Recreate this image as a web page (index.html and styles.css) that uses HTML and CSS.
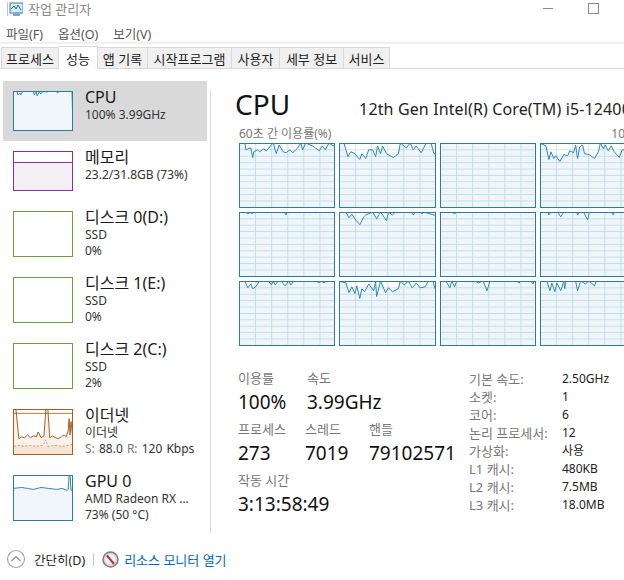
FILE: index.html
```html
<!DOCTYPE html>
<html lang="ko">
<head>
    <meta charset="UTF-8">
    <meta name="viewport" content="width=device-width, initial-scale=1.0">
    <title>작업 관리자</title>
    <link rel="stylesheet" href="styles.css">
</head>
<body>
    <div class="window">
        <div class="titlebar">
            <div class="title">
                <svg class="app-icon" width="16" height="16" viewBox="0 0 16 16">
                    <path d="M0 1v14" stroke="#8a8a8a" fill="none"/>
                    <rect x="3" y="2" width="13" height="10" fill="#d6ecf8" stroke="#3f7fa8"/>
                    <path d="M4 8l3-3 2 3 2-4 3 5" stroke="#2a6d99" fill="none"/>
                    <path d="M6 12h7v3H6z" fill="#7aa7c4"/>
                </svg>
                <span>작업 관리자</span>
            </div>
            <div class="window-buttons">
                <span class="btn-min"></span>
                <span class="btn-max"></span>
            </div>
        </div>

        <div class="menu">
            <span>파일(F)</span>
            <span>옵션(O)</span>
            <span>보기(V)</span>
        </div>

        <div class="tabs">
            <div class="tab tab-process">프로세스</div>
            <div class="tab active">성능</div>
            <div class="tab tab-history">앱 기록</div>
            <div class="tab tab-startup">시작프로그램</div>
            <div class="tab tab-users">사용자</div>
            <div class="tab tab-details">세부 정보</div>
            <div class="tab tab-services">서비스</div>
        </div>

        <div class="main">
            <div class="sidebar">
                <div class="res-row selected short">
                    <svg class="thumb thumb-cpu" viewBox="0 0 60 40" preserveAspectRatio="none">
                        <polygon points="-1,-1 3,-1 4,3 6,1 7,3 9,-1 20,-1 21,3 23,0 24,4 26,0 28,2 30,-1 34,0 36,-1 44,-1 45,1 47,-1 60,-1 61,41 -1,41"/>
                    </svg>
                    <div class="res-text">
                        <div class="res-name">CPU</div>
                        <div class="res-line">100% 3.99GHz</div>
                    </div>
                </div>
                <div class="res-row short">
                    <div class="thumb thumb-mem"><div class="mem-used"></div></div>
                    <div class="res-text">
                        <div class="res-name">메모리</div>
                        <div class="res-line">23.2/31.8GB (73%)</div>
                    </div>
                </div>
                <div class="res-row">
                    <div class="thumb thumb-disk"></div>
                    <div class="res-text">
                        <div class="res-name">디스크 0(D:)</div>
                        <div class="res-line">SSD</div>
                        <div class="res-line">0%</div>
                    </div>
                </div>
                <div class="res-row">
                    <div class="thumb thumb-disk"></div>
                    <div class="res-text">
                        <div class="res-name">디스크 1(E:)</div>
                        <div class="res-line">SSD</div>
                        <div class="res-line">0%</div>
                    </div>
                </div>
                <div class="res-row">
                    <div class="thumb thumb-disk"></div>
                    <div class="res-text">
                        <div class="res-name">디스크 2(C:)</div>
                        <div class="res-line">SSD</div>
                        <div class="res-line">2%</div>
                    </div>
                </div>
                <div class="res-row">
                    <svg class="thumb thumb-net" viewBox="0 0 60 46" preserveAspectRatio="none">
                        <rect class="net-floor" x="0" y="37" width="60" height="9"/>
                        <path class="net-top" d="M0 3.5H60"/>
                        <polyline class="net-send" points="0,38 6,37 10,38 16,37 22,38 30,37 33,31 35,38 42,37 50,38 56,37 60,36"/>
                        <polygon class="net-recv" points="-1,-1 2,-1 5,30 8,28 11,29 14,26 17,29 20,27 23,28 25,23 28,29 31,27 33,-1 35,-1 37,29 40,27 43,29 46,30 49,28 52,26 54,28 56,22 57,9 58,26 59,12 61,30 61,47 -1,47"/>
                    </svg>
                    <div class="res-text">
                        <div class="res-name">이더넷</div>
                        <div class="res-line">이더넷</div>
                        <div class="res-line net-speed"><span class="dim">S:</span> 88.0 <span class="dim">R:</span> 120 Kbps</div>
                    </div>
                </div>
                <div class="res-row">
                    <svg class="thumb thumb-gpu" viewBox="0 0 60 46" preserveAspectRatio="none">
                        <polygon points="-1,13 8,12 14,13 20,14 28,12 36,13 44,14 50,13 55,15 56,14 57,-1 58,-1 59,15 61,14 61,47 -1,47"/>
                    </svg>
                    <div class="res-text">
                        <div class="res-name">GPU 0</div>
                        <div class="res-line">AMD Radeon RX ...</div>
                        <div class="res-line">73% (50 °C)</div>
                    </div>
                </div>
            </div>
            <div class="vsep"></div>

            <div class="detail">
                <div class="detail-head">
                    <h1>CPU</h1>
                    <div class="cpu-model">12th Gen Intel(R) Core(TM) i5-12400</div>
                </div>
                <div class="graph-caption">
                    <span>60초 간 이용률(%)</span>
                    <span class="caption-max">100%</span>
                </div>
                <div class="graphs">
                    <svg class="graph" viewBox="0 0 96 65" preserveAspectRatio="none"><polygon points="-2,-1 5,-1 6,6 8,5 11,4 13,14 14,8 18,6 20,8 24,5 27,7 31,2 34,-1 37,10 40,1 44,8 47,9 51,6 54,9 59,4 62,-1 64,6 67,-1 74,2 77,4 81,7 84,2 87,6 91,-1 95,2 98,2 98,67 -2,67"/></svg>
                    <svg class="graph" viewBox="0 0 96 65" preserveAspectRatio="none"><polygon points="-2,-1 4,-1 8,13 11,8 15,10 20,16 22,10 26,15 29,6 33,6 36,13 38,2 41,10 43,2 47,10 54,14 59,10 61,-1 67,4 71,-1 74,6 77,2 82,9 87,-1 92,-1 95,10 98,10 98,67 -2,67"/></svg>
                    <svg class="graph" viewBox="0 0 96 65" preserveAspectRatio="none"><polygon points="-2,-1 98,-1 98,67 -2,67"/></svg>
                    <svg class="graph" viewBox="0 0 96 65" preserveAspectRatio="none"><polygon points="-2,-1 3,1 5,2 8,16 10,8 13,15 15,12 19,18 23,11 27,12 29,7 33,9 35,1 37,15 39,3 42,1 44,10 49,11 54,15 58,8 60,-1 63,5 65,1 68,7 71,2 74,8 79,14 82,6 84,6 96,4 98,4 98,67 -2,67"/></svg>

                    <svg class="graph" viewBox="0 0 96 65" preserveAspectRatio="none"><polygon points="-2,-1 6,-1 8,1 11,-1 12,1 14,-1 45,-1 47,2 48,-1 98,-1 98,67 -2,67"/></svg>
                    <svg class="graph" viewBox="0 0 96 65" preserveAspectRatio="none"><polygon points="-2,-1 6,-1 9,5 12,1 15,6 20,12 24,4 26,2 33,-1 37,6 41,-1 47,8 49,-1 53,2 56,-1 72,-1 74,2 76,-1 82,-1 83,1 84,-1 95,2 98,2 98,67 -2,67"/></svg>
                    <svg class="graph" viewBox="0 0 96 65" preserveAspectRatio="none"><polygon points="-2,-1 11,-1 14,1 16,-1 98,-1 98,67 -2,67"/></svg>
                    <svg class="graph" viewBox="0 0 96 65" preserveAspectRatio="none"><polygon points="-2,-1 7,-1 8,2 10,-1 17,-1 20,4 23,-1 36,-1 37,2 39,-1 43,-1 47,7 49,-1 71,-1 73,2 74,-1 98,-1 98,67 -2,67"/></svg>

                    <svg class="graph" viewBox="0 0 96 65" preserveAspectRatio="none"><polygon points="-2,-1 5,-1 8,6 11,2 13,7 16,5 20,-1 29,-1 32,3 34,-1 36,3 39,-1 42,-1 46,4 50,-1 52,3 55,-1 78,-1 81,1 83,-1 86,1 87,-1 98,-1 98,67 -2,67"/></svg>
                    <svg class="graph" viewBox="0 0 96 65" preserveAspectRatio="none"><polygon points="-2,-1 6,1 9,11 12,5 15,12 17,4 20,17 22,7 25,10 29,2 34,9 36,-1 37,15 41,-1 46,11 49,6 53,10 59,7 61,-1 65,3 69,-1 73,6 77,1 81,6 86,5 89,-1 94,-1 96,7 98,7 98,67 -2,67"/></svg>
                    <svg class="graph" viewBox="0 0 96 65" preserveAspectRatio="none"><polygon points="-2,-1 5,-1 9,6 11,-1 14,5 16,-1 35,-1 38,1 43,-1 47,9 50,-1 77,-1 80,1 81,-1 92,-1 94,2 95,-1 98,-1 98,67 -2,67"/></svg>
                    <svg class="graph" viewBox="0 0 96 65" preserveAspectRatio="none"><polygon points="-2,-1 6,-1 9,9 11,1 14,10 16,1 20,9 23,-1 24,7 25,-1 35,-1 37,9 40,-1 45,2 48,-1 51,1 54,4 56,-1 98,-1 98,67 -2,67"/></svg>
                </div>

                <div class="stats">
                    <div class="stats-left">
                        <div class="stat-row">
                            <div class="stat stat-a"><div class="stat-label">이용률</div><div class="stat-value">100%</div></div>
                            <div class="stat"><div class="stat-label">속도</div><div class="stat-value">3.99GHz</div></div>
                        </div>
                        <div class="stat-row">
                            <div class="stat stat-b"><div class="stat-label">프로세스</div><div class="stat-value">273</div></div>
                            <div class="stat stat-c"><div class="stat-label">스레드</div><div class="stat-value">7019</div></div>
                            <div class="stat"><div class="stat-label">핸들</div><div class="stat-value">79102571</div></div>
                        </div>
                        <div class="stat-row">
                            <div class="stat"><div class="stat-label">작동 시간</div><div class="stat-value">3:13:58:49</div></div>
                        </div>
                    </div>
                    <div class="specs">
                        <span class="spec-key">기본 속도:</span><span>2.50GHz</span>
                        <span class="spec-key">소켓:</span><span>1</span>
                        <span class="spec-key">코어:</span><span>6</span>
                        <span class="spec-key">논리 프로세서:</span><span>12</span>
                        <span class="spec-key">가상화:</span><span>사용</span>
                        <span class="spec-key">L1 캐시:</span><span>480KB</span>
                        <span class="spec-key">L2 캐시:</span><span>7.5MB</span>
                        <span class="spec-key">L3 캐시:</span><span>18.0MB</span>
                    </div>
                </div>
            </div>
        </div>

        <div class="footer">
            <svg class="collapse-icon" width="20" height="20" viewBox="0 0 20 20">
                <circle cx="10" cy="10" r="8.5" fill="#fff" stroke="#a8a8a8" stroke-width="1.2"/>
                <path d="M5.5 12l4.500-4.500 4.500 4.500" fill="none" stroke="#8c8c8c" stroke-width="1.2"/>
            </svg>
            <span class="collapse-label">간단히(D)</span>
            <span class="footer-sep"></span>
            <svg class="monitor-icon" width="17" height="17" viewBox="0 0 17 17">
                <circle cx="8.500" cy="8.500" r="7.500" fill="#d8d8d8" stroke="#7f7f7f" stroke-width="1.500"/>
                <circle cx="8.500" cy="8.500" r="5" fill="#f4f4f4"/>
                <path d="M5 4.500l7 8.500" stroke="#b5332e" stroke-width="2"/>
            </svg>
            <span class="monitor-link">리소스 모니터 열기</span>
        </div>
    </div>
</body>
</html>
```

FILE: styles.css
```css
body {
    margin: 0;
    background-color: #fff;
    font-family: "Noto Sans", "Noto Sans CJK KR", sans-serif;
    color: #1a1a1a;
    overflow: hidden;
}
.window {
    width: 624px;
    height: 580px;
    overflow: hidden;
}

/* title bar and menu */
.titlebar {
    height: 17px;
    display: flex;
    justify-content: space-between;
    align-items: center;
    padding-left: 7px;
    padding-right: 25px;
}
.title {
    display: flex;
    align-items: center;
    gap: 5px;
    font-size: 13px;
    color: #8a8a8a;
}
.window-buttons {
    display: flex;
    align-items: center;
    gap: 35px;
}
.btn-min {
    width: 10px;
    height: 1px;
    background-color: #8a8a8a;
}
.btn-max {
    width: 9px;
    height: 9px;
    border: 1px solid #8a8a8a;
}
.menu {
    height: 18px;
    padding-top: 7px;
    display: flex;
    align-items: center;
    gap: 15px;
    padding-left: 6px;
    font-size: 12.5px;
    color: #555;
    border-bottom: 2px solid #f0f0f0;
}

/* tabs */
.tabs {
    height: 21px;
    margin-top: 3px;
    display: flex;
    padding-left: 1px;
    border-bottom: 1px solid #d9d9d9;
    font-size: 13px;
}
.tab {
    box-sizing: border-box;
    display: flex;
    align-items: center;
    justify-content: center;
    background-color: #f0f0f0;
    border: 1px solid #d9d9d9;
    border-bottom: none;
    border-left: none;
    color: #222;
}
.tab.active {
    width: 39px;
    margin-top: -1px;
    background-color: #fff;
    height: 23px;
}
.tab-process { width: 58px; border-left: 1px solid #d9d9d9; }
.tab-history { width: 50px; }
.tab-startup { width: 84px; }
.tab-users { width: 48px; }
.tab-details { width: 64px; }
.tab-services { width: 46px; }

/* sidebar */
.main {
    display: flex;
}
.sidebar {
    width: 204px;
    margin-left: 3px;
    margin-top: 12px;
    flex-shrink: 0;
}
.res-row {
    height: 66px;
    box-sizing: border-box;
    padding: 6px 0 0 10px;
    display: flex;
    gap: 12px;
}
.res-row.short {
    height: 60px;
}
.res-row.selected {
    background-color: #d9d9d9;
}
.thumb {
    box-sizing: border-box;
    display: block;
    width: 60px;
    height: 46px;
    margin-top: 4px;
    flex-shrink: 0;
    background-color: #fff;
}
.short .thumb {
    height: 40px;
}
.res-name {
    font-size: 16px;
    line-height: 20px;
}
.res-line {
    font-size: 12px;
    line-height: 15.500px;
    color: #333;
    white-space: nowrap;
}
.net-speed {
    word-spacing: 1px;
}
.dim {
    color: #777;
}
.thumb-cpu, .thumb-gpu {
    border: 1px solid #2b7ba6;
}
.thumb-cpu polygon, .thumb-gpu polygon {
    fill: #f1f6fa;
    stroke: #2f86bf;
    stroke-width: 1;
    vector-effect: non-scaling-stroke;
}
.thumb-mem {
    border: 1px solid #8b2f9e;
    padding-top: 10px;
}
.mem-used {
    height: 100%;
    box-sizing: border-box;
    background-color: #f3f0f5;
    border-top: 1px solid #8b2f9e;
}
.thumb-disk {
    border: 1px solid #6a9f35;
}
.thumb-net {
    border: 1px solid #a75d1e;
}
.net-floor {
    fill: #fdf0e5;
}
.net-top {
    stroke: #b9733a;
    fill: none;
}
.net-send {
    stroke: #d8986a;
    stroke-dasharray: 2 2;
    fill: none;
}
.net-recv {
    fill: rgba(167, 93, 30, 0.08);
    stroke: #a75d1e;
    stroke-width: 1;
}
.vsep {
    width: 1px;
    height: 443px;
    margin-top: 21px;
    margin-left: 3px;
    background-color: #d9d9d9;
    flex-shrink: 0;
}

/* cpu detail */
.detail {
    flex: 1;
    min-width: 0;
    padding-left: 25px;
}
.detail-head {
    height: 56px;
    display: flex;
    align-items: baseline;
    white-space: nowrap;
}
.detail-head h1 {
    margin: 0 0 0 -1px;
    font-size: 28px;
    line-height: 70px;
    font-weight: 400;
    color: #111;
}
.cpu-model {
    margin-left: 69px;
    font-size: 16px;
    letter-spacing: 0.13px;
    color: #222;
}
.graph-caption {
    height: 18px;
    padding-left: 3px;
    font-size: 12px;
    line-height: 18px;
    color: #777;
    white-space: nowrap;
    display: flex;
}
.caption-max {
    margin-left: 280px;
}
.graphs {
    margin-left: 3px;
    width: 400px;
    display: grid;
    grid-template-columns: 96px 97px 96px 97px;
    grid-auto-rows: 65px;
    gap: 4px;
}
.graph {
    box-sizing: border-box;
    display: block;
    width: 100%;
    height: 100%;
    border: 1px solid #2b7ba6;
    background-color: #fff;
    background-image:
        linear-gradient(to right, #d3e3ee 1px, transparent 1px),
        linear-gradient(to bottom, #d3e3ee 1px, transparent 1px);
    background-size: 16.100px 6.400px;
    background-position: -1px -1px;
}
.graph polygon {
    fill: rgba(17, 125, 187, 0.07);
    stroke: #2f86bf;
    stroke-width: 1;
    vector-effect: non-scaling-stroke;
}

/* numbers under the graphs */
.stats {
    margin-top: 25px;
    margin-left: 2px;
    display: flex;
}
.stats-left {
    width: 231px;
    flex-shrink: 0;
}
.stat-row {
    display: flex;
    height: 51px;
}
.stat-a { width: 69px; }
.stat-b { width: 67px; }
.stat-c { width: 64px; }
.stat-label {
    font-size: 13px;
    line-height: 15px;
    color: #777;
}
.stat-value {
    font-size: 19px;
    line-height: 33px;
    color: #111;
    white-space: nowrap;
}
.specs {
    display: grid;
    grid-template-columns: 93px 1fr;
    grid-auto-rows: 18px;
    font-size: 12px;
    line-height: 16px;
    color: #222;
}
.spec-key {
    font-size: 13px;
    color: #777;
    white-space: nowrap;
}

/* bottom bar */
.footer {
    margin-top: 15px;
    padding-left: 6px;
    height: 22px;
    display: flex;
    align-items: center;
    font-size: 13px;
}
.collapse-label {
    margin-left: 8px;
    font-size: 12.5px;
    color: #222;
}
.footer-sep {
    width: 1px;
    height: 13px;
    margin-left: 8px;
    background-color: #c8c8c8;
}
.monitor-icon {
    margin-left: 8px;
}
.monitor-link {
    margin-left: 5px;
    color: #0066cc;
}
```
